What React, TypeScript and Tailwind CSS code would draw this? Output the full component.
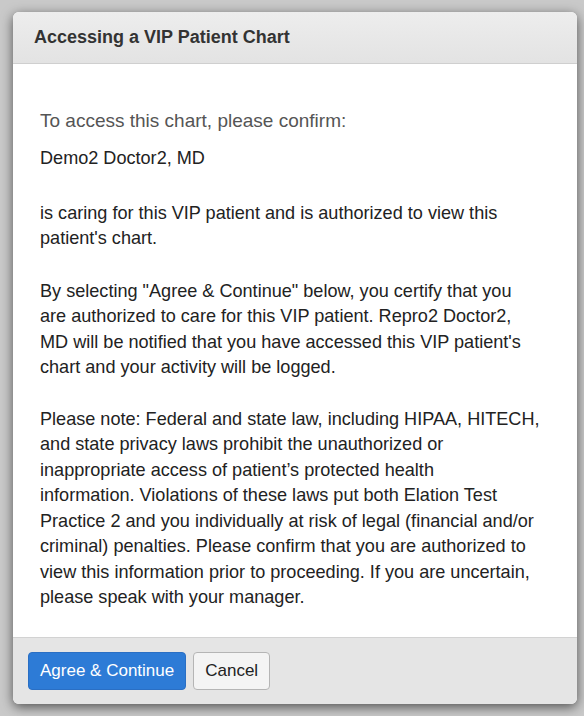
const P2 = [
  'By selecting "Agree & Continue" below, you certify that you',
  'are authorized to care for this VIP patient. Repro2 Doctor2,',
  "MD will be notified that you have accessed this VIP patient's",
  'chart and your activity will be logged.',
];

const P3 = [
  'Please note: Federal and state law, including HIPAA, HITECH,',
  'and state privacy laws prohibit the unauthorized or',
  'inappropriate access of patient’s protected health',
  'information. Violations of these laws put both Elation Test',
  'Practice 2 and you individually at risk of legal (financial and/or',
  'criminal) penalties. Please confirm that you are authorized to',
  'view this information prior to proceeding. If you are uncertain,',
  'please speak with your manager.',
];

function Lines({ lines, className = '' }: { lines: string[]; className?: string }) {
  return (
    <p className={className}>
      {lines.map((l, i) => (
        <span key={i} className="block whitespace-nowrap">{l}</span>
      ))}
    </p>
  );
}

export default function App() {
  return (
    <div
      className="min-h-[716px] w-full bg-[#c9c9c9] px-[13px] pt-[12px]"
      style={{ fontFamily: "'Liberation Sans', Arial, sans-serif" }}
    >
      <div className="flex w-[564px] flex-col overflow-hidden rounded-[6px] bg-white shadow-[0_3px_12px_rgba(0,0,0,0.6)]">
        {/* header */}
        <div className="flex h-[52px] items-center border-b border-[#cfcfcf] bg-gradient-to-b from-[#ededed] to-[#e3e3e3] px-[21px]">
          <h1 className="text-[18px] font-bold text-[#333]">Accessing a VIP Patient Chart</h1>
        </div>

        {/* body */}
        <div className="px-[27px] pt-[44px] pb-[26px] text-[18.1px] leading-[25.5px] text-[#222]">
          <p className="text-[19px] leading-[26px] text-[#555]">
            To access this chart, please confirm:
          </p>
          <p className="mt-[12px]">Demo2 Doctor2, MD</p>
          <Lines
            className="mt-[29px]"
            lines={['is caring for this VIP patient and is authorized to view this', "patient's chart."]}
          />
          <Lines className="mt-[27px]" lines={P2} />
          <Lines className="mt-[26px]" lines={P3} />
        </div>

        {/* footer */}
        <div className="flex h-[67px] items-center gap-[7px] border-t border-[#d2d2d2] bg-[#e5e5e5] px-[15px]">
          <button className="h-[38px] rounded-[4px] border border-[#2a6fc4] bg-[#2d7bd6] px-[11px] text-[17px] text-white">
            Agree &amp; Continue
          </button>
          <button className="h-[38px] rounded-[4px] border border-[#b5b5b5] bg-[#f4f4f4] px-[11px] text-[17px] text-[#222]">
            Cancel
          </button>
        </div>
      </div>
    </div>
  );
}
